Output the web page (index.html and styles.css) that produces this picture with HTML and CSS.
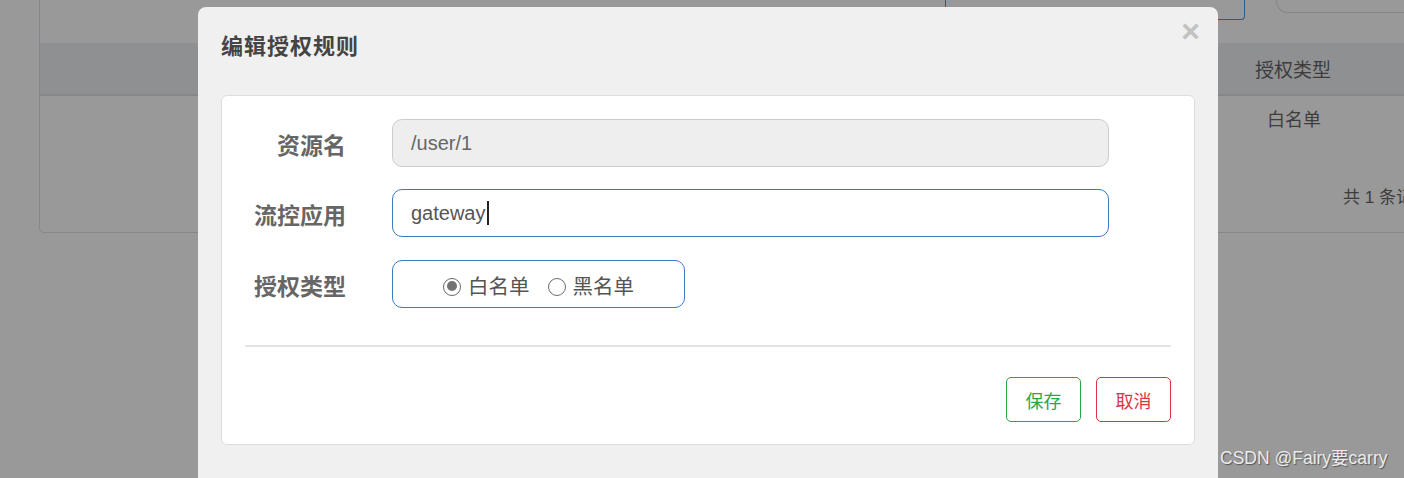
FILE: index.html
```html
<html lang="zh-CN">
<head>
    <meta charset="UTF-8">
    <meta name="viewport" content="width=device-width, initial-scale=1.0">
    <title>编辑授权规则</title>
    <link rel="stylesheet" href="styles.css">
</head>
<body>
    <!-- page behind the modal, already dimmed by the backdrop -->
    <main class="page">
        <section class="rule-card">
            <div class="toolbar">
                <div class="search-box"></div>
                <div class="search-input"></div>
            </div>
            <div class="table-head">
                <span class="col-type">授权类型</span>
            </div>
            <div class="table-row">
                <span class="col-type">白名单</span>
            </div>
            <div class="table-foot">共 1 条记录</div>
        </section>
    </main>

    <div class="modal">
        <div class="modal-header">
            <h2 class="modal-title">编辑授权规则</h2>
            <span class="modal-close">&times;</span>
        </div>
        <div class="modal-body">
            <div class="form-row">
                <label class="form-label">资源名</label>
                <div class="form-input disabled">/user/1</div>
            </div>
            <div class="form-row">
                <label class="form-label">流控应用</label>
                <div class="form-input">gateway<span class="caret"></span></div>
            </div>
            <div class="form-row">
                <label class="form-label">授权类型</label>
                <div class="radio-group">
                    <span class="radio checked"></span>
                    <span class="radio-text">白名单</span>
                    <span class="radio"></span>
                    <span class="radio-text">黑名单</span>
                </div>
            </div>
            <hr class="divider">
            <div class="modal-actions">
                <button class="btn btn-save">保存</button>
                <button class="btn btn-cancel">取消</button>
            </div>
        </div>
    </div>

    <div class="watermark">CSDN @Fairy要carry</div>
</body>
</html>
```

FILE: styles.css
```css
:root {
    --modal-bg: #f0f0f0;
    --label-color: #666666;
    --input-border: #3a7bbf;
    --success-color: #28a745;
    --danger-color: #dc3545;
}

* {
    margin: 0;
    padding: 0;
    box-sizing: border-box;
    font-family: 'Liberation Sans', 'Noto Sans CJK SC', sans-serif;
}

body {
    width: 1404px;
    height: 478px;
    overflow: hidden;
    background-color: #999999;
    position: relative;
}

/* background page */
.page {
    padding-left: 39px;
    overflow: hidden;
}

.rule-card {
    width: 1420px;
    height: 258px;
    margin-top: -25px;
    border: 1px solid #878787;
    border-radius: 5px;
}

.toolbar {
    height: 67px;
    display: flex;
    align-items: flex-start;
    padding-left: 905px;
    gap: 31px;
}

.search-box {
    flex-shrink: 0;
    width: 300px;
    height: 44px;
    border: 1px solid #2d5b8c;
    border-radius: 0 0 4px 4px;
    border-top: none;
}

.search-input {
    flex-shrink: 0;
    width: 200px;
    height: 37px;
    border: 1px solid #858585;
    border-top: none;
    border-radius: 0 0 12px 12px;
}

.table-head {
    height: 53px;
    background-color: #8f9092;
    border-bottom: 2px solid #878787;
    display: flex;
    align-items: center;
    color: #3d3d3d;
    font-size: 19px;
}

.table-row {
    height: 44px;
    display: flex;
    align-items: center;
    color: #3d3d3d;
    font-size: 18px;
}

.table-head .col-type {
    margin-left: 1215px;
}

.table-row .col-type {
    margin-left: 1227px;
}

.table-foot {
    padding-top: 43px;
    padding-left: 1303px;
    color: #3d3d3d;
    font-size: 17px;
    white-space: nowrap;
}

/* modal */
.modal {
    position: absolute;
    left: 198px;
    top: 7px;
    width: 1020px;
    height: 471px;
    background-color: var(--modal-bg);
    border-radius: 8px 8px 0 0;
    padding: 0 23px;
}

.modal-header {
    height: 88px;
    display: flex;
    align-items: flex-start;
    justify-content: space-between;
}

.modal-title {
    margin-top: 26px;
    font-size: 22px;
    line-height: 28px;
    font-weight: 700;
    color: #444444;
    letter-spacing: 1px;
}

.modal-close {
    margin-top: 8px;
    margin-right: -5px;
    font-size: 32px;
    line-height: 32px;
    font-weight: 700;
    color: #c2c2c2;
}

.modal-body {
    background-color: #ffffff;
    border: 1px solid #dddddd;
    border-radius: 6px;
    height: 350px;
    padding: 23px 23px 0;
}

.form-row {
    display: flex;
    align-items: center;
    margin-bottom: 22px;
}

.form-row:nth-child(2) {
    margin-bottom: 23px;
}

.form-label {
    width: 101px;
    text-align: right;
    margin-right: 46px;
    padding-top: 6px;
    font-size: 23px;
    line-height: 28px;
    font-weight: 700;
    color: var(--label-color);
    white-space: nowrap;
}

.form-input {
    width: 717px;
    height: 48px;
    border: 1px solid var(--input-border);
    border-radius: 10px;
    padding: 0 18px;
    display: flex;
    align-items: center;
    font-size: 20px;
    color: #555555;
}

.form-input.disabled {
    background-color: #eeeeee;
    border-color: #cccccc;
    color: #666666;
}

.caret {
    display: inline-block;
    width: 2px;
    height: 24px;
    background-color: #222222;
    margin-left: 1px;
}

.radio-group {
    width: 293px;
    height: 48px;
    border: 1px solid var(--input-border);
    border-radius: 10px;
    display: flex;
    align-items: center;
    justify-content: center;
    padding-top: 5px;
    font-size: 20.5px;
    color: #555555;
}

.radio {
    width: 18px;
    height: 18px;
    border: 1.5px solid #6a6a6a;
    border-radius: 50%;
    margin-right: 7px;
    position: relative;
}

.radio.checked::after {
    content: '';
    position: absolute;
    left: 2.5px;
    top: 2.5px;
    width: 10px;
    height: 10px;
    border-radius: 50%;
    background-color: #737373;
}

.radio-text {
    margin-right: 18px;
    line-height: 26px;
}

.radio-text:last-child {
    margin-right: 0;
}

.divider {
    border: none;
    border-top: 2px solid #e3e3e3;
    margin-top: 37px;
}

.modal-actions {
    display: flex;
    justify-content: flex-end;
    gap: 15px;
    margin-top: 30px;
}

.btn {
    width: 75px;
    height: 45px;
    background-color: #ffffff;
    border: 1px solid;
    border-radius: 5px;
    font-size: 18px;
}

.btn-save {
    color: var(--success-color);
    border-color: var(--success-color);
}

.btn-cancel {
    color: var(--danger-color);
    border-color: var(--danger-color);
}

.watermark {
    position: absolute;
    left: 1220px;
    top: 446px;
    font-size: 17.5px;
    line-height: 24px;
    color: #ececec;
    text-shadow: 1px 1px 1px #555555;
    white-space: nowrap;
}
```
